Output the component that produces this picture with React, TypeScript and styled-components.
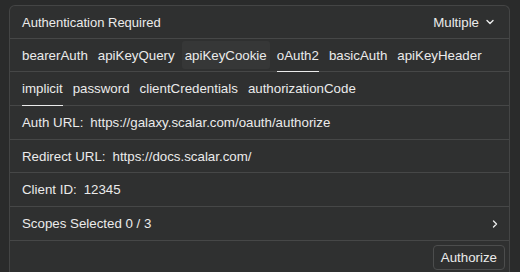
import React from "react";
import styled, { createGlobalStyle } from "styled-components";

const Global = createGlobalStyle`
  html, body { margin: 0; padding: 0; background: #2a2b2b; }
  body { font-family: "Liberation Sans", Arial, sans-serif; color: #ebebeb; -webkit-font-smoothing: antialiased; }
  * { box-sizing: border-box; }
`;

const Page = styled.div`
  width: 520px;
  height: 272px;
  overflow: hidden;
  padding: 5px 10px 0 9px;
`;

const Panel = styled.div`
  border: 1px solid #444545;
  border-bottom: none;
  border-radius: 6px 6px 0 0;
  background: #2f3030;
  height: 300px;
`;

const Row = styled.div<{ $h?: number }>`
  height: ${(p) => p.$h ?? 34}px;
  display: flex;
  align-items: center;
  padding: 0 12px;
  border-bottom: 1px solid #464747;
  font-size: 13.3px;
`;

const Header = styled(Row)`
  justify-content: space-between;
  font-size: 13px;
`;

const Title = styled.span`
  color: #ebebeb;
`;

const Selector = styled.span`
  display: flex;
  align-items: center;
  gap: 6px;
  margin-right: 2px;
  font-size: 13.3px;
`;

const TabRow = styled(Row)`
  gap: 4px;
  padding: 0 6px 0 9px;
`;

const Tab = styled.span<{ $active?: boolean; $hover?: boolean }>`
  position: relative;
  height: 28px;
  display: flex;
  align-items: center;
  padding: 0 3px;
  border-radius: 3px;
  color: #ebebeb;
  background: ${(p) => (p.$hover ? "#363737" : "transparent")};
  &::after {
    content: "";
    display: ${(p) => (p.$active ? "block" : "none")};
    position: absolute;
    left: 3px;
    right: 3px;
    bottom: -3px;
    height: 1px;
    background: #ebebeb;
  }
`;

const Label = styled.span`
  color: #ebebeb;
  margin-right: 7px;
`;

const Value = styled.span`
  color: #ebebeb;
`;

const ScopesRow = styled(Row)`
  justify-content: space-between;
  padding-right: 9px;
`;

const Footer = styled.div`
  display: flex;
  justify-content: flex-end;
  padding: 4px 4px 0 0;
`;

const Button = styled.button`
  font-family: "Liberation Sans", Arial, sans-serif;
  font-size: 13.3px;
  color: #ebebeb;
  background: #2f3030;
  border: 1px solid #4c4d4d;
  border-radius: 4px;
  height: 25px;
  padding: 0 7px;
`;

const Chevron = ({ dir }: { dir: "down" | "right" }) => (
  <svg width="10" height="10" viewBox="0 0 10 10" fill="none" stroke="#ebebeb" strokeWidth="1.4" strokeLinecap="round" strokeLinejoin="round">
    {dir === "down" ? <path d="M2 3.5 L5 6.5 L8 3.5" /> : <path d="M3.5 2 L6.5 5 L3.5 8" />}
  </svg>
);

export default function App() {
  const tabs = ["bearerAuth", "apiKeyQuery", "apiKeyCookie", "oAuth2", "basicAuth", "apiKeyHeader"];
  const flows = ["implicit", "password", "clientCredentials", "authorizationCode"];
  return (
    <Page>
      <Global />
      <Panel>
        <Header $h={33}>
          <Title>Authentication Required</Title>
          <Selector>
            Multiple <Chevron dir="down" />
          </Selector>
        </Header>
        <TabRow $h={33}>
          {tabs.map((t) => (
            <Tab key={t} $active={t === "oAuth2"} $hover={t === "apiKeyCookie"}>
              {t}
            </Tab>
          ))}
        </TabRow>
        <TabRow $h={34}>
          {flows.map((t) => (
            <Tab key={t} $active={t === "implicit"}>
              {t}
            </Tab>
          ))}
        </TabRow>
        <Row>
          <Label>Auth URL:</Label>
          <Value>https://galaxy.scalar.com/oauth/authorize</Value>
        </Row>
        <Row $h={33}>
          <Label>Redirect URL:</Label>
          <Value>https://docs.scalar.com/</Value>
        </Row>
        <Row>
          <Label>Client ID:</Label>
          <Value>12345</Value>
        </Row>
        <ScopesRow>
          <span>Scopes Selected 0 / 3</span>
          <Chevron dir="right" />
        </ScopesRow>
        <Footer>
          <Button>Authorize</Button>
        </Footer>
      </Panel>
    </Page>
  );
}
